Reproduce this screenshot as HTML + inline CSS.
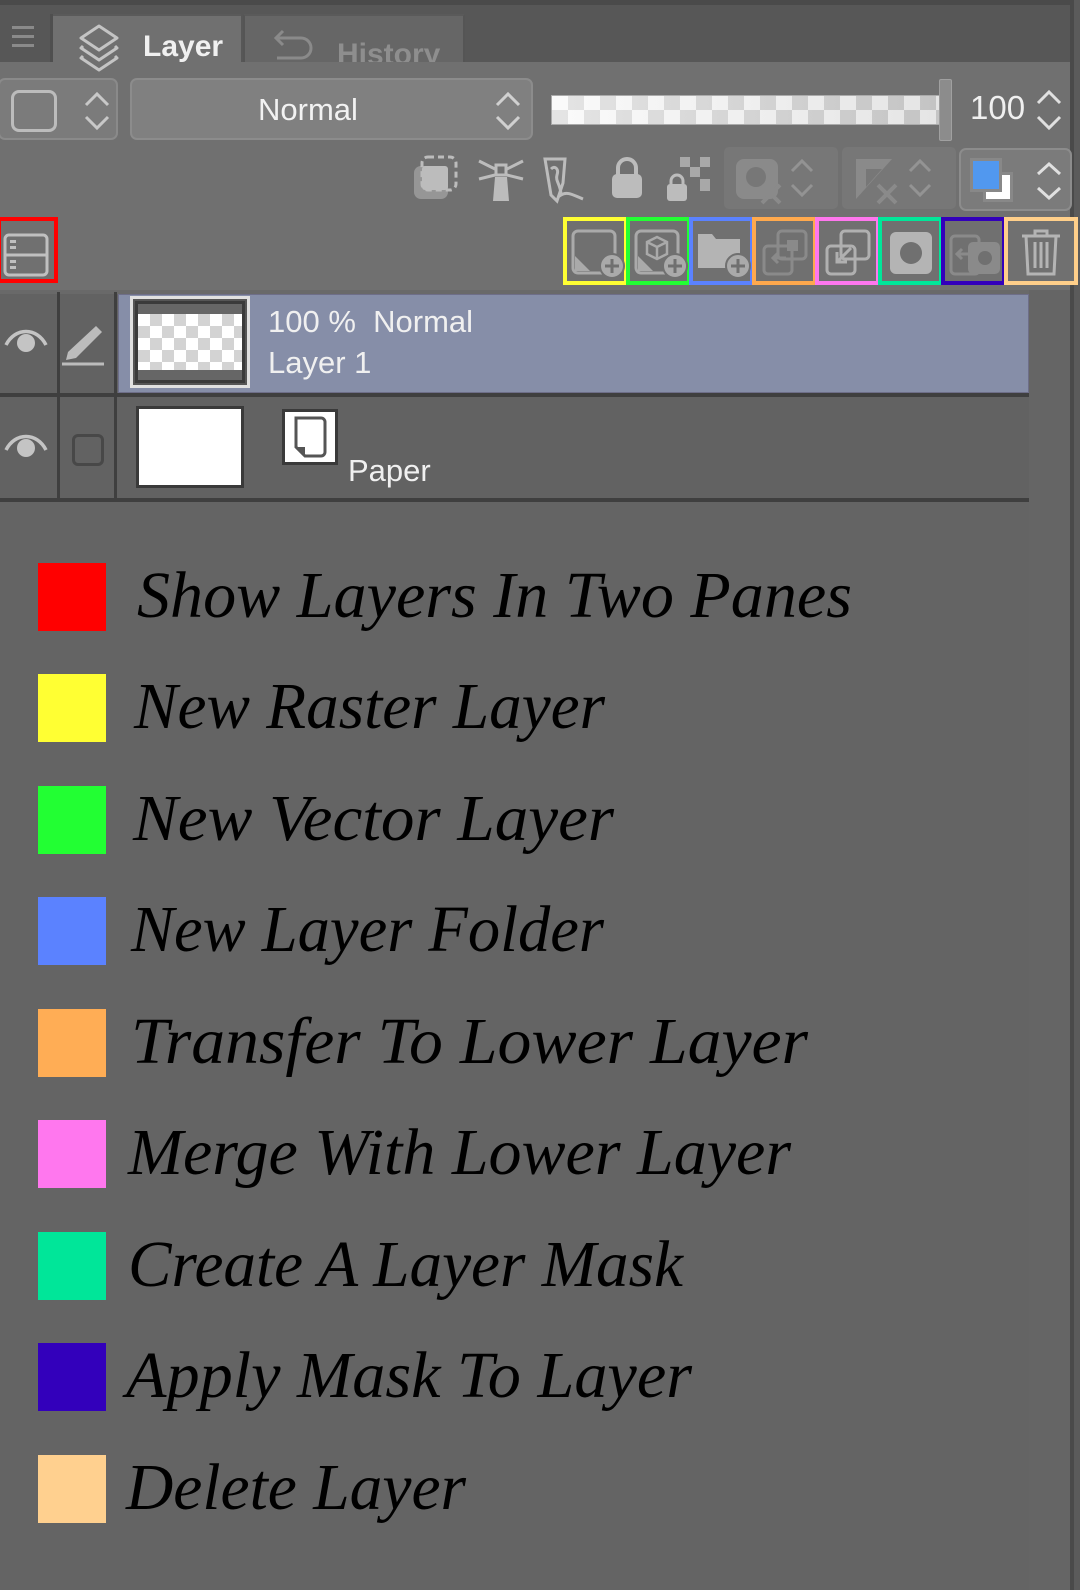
<!DOCTYPE html>
<html><head><meta charset="utf-8"><style>
html,body{margin:0;padding:0}
body{width:1080px;height:1590px;background:#646464;position:relative;overflow:hidden;font-family:"Liberation Sans",sans-serif}
.a{position:absolute}
</style></head><body>
<!-- header -->
<div class="a" style="left:0;top:0;width:1080px;height:62px;background:#575757"></div>
<div class="a" style="left:0;top:0;width:1080px;height:5px;background:#4a4a4a"></div>
<div class="a" style="left:0;top:62px;width:1072px;height:228px;background:#707070"></div>
<div class="a" style="left:1029px;top:290px;width:43px;height:1300px;background:#656565"></div>
<div class="a" style="left:1070px;top:0;width:4px;height:1590px;background:#4a4a4a"></div>
<div class="a" style="left:1074px;top:0;width:6px;height:1590px;background:#5b5b5b"></div>
<!-- hamburger -->
<div class="a" style="left:12px;top:26px;width:22px;height:3px;background:#8a8a8a"></div>
<div class="a" style="left:12px;top:35px;width:22px;height:3px;background:#8a8a8a"></div>
<div class="a" style="left:12px;top:44px;width:22px;height:3px;background:#8a8a8a"></div>
<div class="a" style="left:50px;top:14px;width:3px;height:48px;background:#4f4f4f"></div>
<!-- Layer tab -->
<div class="a" style="left:53px;top:14px;width:188px;height:48px;background:#707070;border-top:2px solid #5a5a5a"></div>
<svg class="a" style="left:74px;top:22px" width="50" height="55" viewBox="0 0 50 55"><g fill="none" stroke="#c4c4c4" stroke-width="3" stroke-linejoin="round"><path d="M25 4 L43 16 L25 28 L7 16 Z"/><path d="M9 24 L7 26 L25 38 L43 26 L41 24"/><path d="M9 34 L7 36 L25 48 L43 36 L41 34"/></g></svg>
<div class="a" style="left:143px;top:30px;font-size:30px;font-weight:bold;color:#f0f0f0">Layer</div>
<!-- History tab -->
<div class="a" style="left:243px;top:14px;width:218px;height:46px;background:#666;border-top:2px solid #5a5a5a;border-left:2px solid #555;border-right:2px solid #555;overflow:hidden">
<svg class="a" style="left:24px;top:12px" width="50" height="40" viewBox="0 0 50 40"><g fill="none" stroke="#8a8a8a" stroke-width="3"><path d="M8 10 H32 A10 10 0 0 1 32 30 H8"/><path d="M14 3 L7 10 L14 17"/></g></svg>
<div class="a" style="left:92px;top:22px;font-size:30px;font-weight:bold;color:#8e8e8e">History</div>
</div>
<!-- row 2 -->
<div class="a" style="left:-2px;top:78px;width:120px;height:62px;border:2px solid #8a8a8a;border-radius:7px;background:#7b7b7b;box-sizing:border-box"></div>
<div class="a" style="left:11px;top:90px;width:46px;height:42px;border:3px solid #bcbcbc;border-radius:8px;box-sizing:border-box"></div>
<svg class="a" style="left:82px;top:90px" width="30" height="42" viewBox="0 0 30 42"><g fill="none" stroke="#c8c8c8" stroke-width="3"><path d="M4 15 L15 4 L26 15"/><path d="M4 27 L15 38 L26 27"/></g></svg>
<div class="a" style="left:130px;top:78px;width:403px;height:62px;border:2px solid #8c8c8c;border-radius:7px;background:#808080;box-sizing:border-box"></div>
<div class="a" style="left:258px;top:92px;font-size:31px;color:#f2f2f2">Normal</div>
<svg class="a" style="left:493px;top:90px" width="30" height="42" viewBox="0 0 30 42"><g fill="none" stroke="#d0d0d0" stroke-width="3"><path d="M4 15 L15 4 L26 15"/><path d="M4 27 L15 38 L26 27"/></g></svg>
<!-- slider -->
<div class="a" style="left:551px;top:95px;width:393px;height:28px;border:1px solid #aaa;background-color:#ddd;background-image:linear-gradient(90deg,rgba(255,255,255,.6),rgba(205,205,205,.4)),repeating-conic-gradient(#bdbdbd 0 25%,#f4f4f4 0 50%);background-size:100% 100%,32px 28px"></div>
<div class="a" style="left:939px;top:79px;width:11px;height:60px;background:#8c8c8c;border:1px solid #a0a0a0;border-radius:2px"></div>
<div class="a" style="left:970px;top:89px;font-size:33px;color:#f0f0f0">100</div>
<svg class="a" style="left:1034px;top:88px" width="30" height="44" viewBox="0 0 30 44"><g fill="none" stroke="#e0e0e0" stroke-width="3"><path d="M4 15 L15 4 L26 15"/><path d="M4 29 L15 40 L26 29"/></g></svg>
<!-- row 3 icons -->
<svg class="a" style="left:412px;top:152px" width="50" height="50" viewBox="0 0 50 50"><rect x="2" y="14" width="34" height="33" rx="7" fill="#969696"/><rect x="10" y="5" width="34" height="33" rx="6" fill="none" stroke="#bcbcbc" stroke-width="3" stroke-dasharray="6 4"/><rect x="10" y="14" width="26" height="24" rx="3" fill="#bcbcbc"/></svg>
<svg class="a" style="left:477px;top:155px" width="48" height="50" viewBox="0 0 48 50"><g stroke="#bcbcbc" stroke-width="3"><path d="M2 6 L18 14 M46 6 L30 14 M2 24 L18 20 M46 24 L30 20"/></g><rect x="19" y="10" width="10" height="10" fill="none" stroke="#bcbcbc" stroke-width="3"/><path d="M18 22 H30 L32 46 H16 Z" fill="#bcbcbc"/></svg>
<svg class="a" style="left:543px;top:155px" width="48" height="50" viewBox="0 0 48 50"><path d="M2 4 H22 L20 28 L14 46 L8 40 Z" fill="none" stroke="#bcbcbc" stroke-width="3"/><path d="M8 14 C12 10 16 14 14 20 C12 26 18 30 18 40 C24 36 30 40 40 44" fill="none" stroke="#bcbcbc" stroke-width="3"/></svg>
<svg class="a" style="left:609px;top:155px" width="36" height="46" viewBox="0 0 36 46"><path d="M9 20 V13 A9 9 0 0 1 27 13 V20" fill="none" stroke="#bcbcbc" stroke-width="4"/><rect x="3" y="19" width="30" height="24" rx="5" fill="#bcbcbc"/></svg>
<svg class="a" style="left:665px;top:155px" width="50" height="50" viewBox="0 0 50 50"><g fill="#a8a8a8"><rect x="15" y="2" width="10" height="10"/><rect x="35" y="2" width="10" height="10"/><rect x="25" y="12" width="10" height="10"/><rect x="35" y="24" width="10" height="12"/></g><path d="M6 30 V26 A6 6 0 0 1 18 26 V30" fill="none" stroke="#bcbcbc" stroke-width="3"/><rect x="2" y="29" width="20" height="17" rx="3" fill="#bcbcbc"/></svg>
<div class="a" style="left:724px;top:147px;width:114px;height:62px;background:#777;border-radius:5px"></div>
<svg class="a" style="left:732px;top:155px" width="90" height="50" viewBox="0 0 90 50"><rect x="4" y="4" width="42" height="40" rx="8" fill="#8a8a8a"/><circle cx="24" cy="22" r="10" fill="#777"/><path d="M30 30 L48 48 M48 30 L30 48" stroke="#8a8a8a" stroke-width="4"/><g fill="none" stroke="#939393" stroke-width="3"><path d="M60 16 L70 6 L80 16"/><path d="M60 30 L70 40 L80 30"/></g></svg>
<div class="a" style="left:842px;top:147px;width:114px;height:62px;background:#777;border-radius:5px"></div>
<svg class="a" style="left:852px;top:155px" width="90" height="50" viewBox="0 0 90 50"><path d="M4 4 H40 L4 44 Z" fill="#8a8a8a"/><path d="M14 14 H30 L14 32 Z" fill="#777"/><path d="M26 30 L44 48 M44 30 L26 48" stroke="#8a8a8a" stroke-width="4"/><g fill="none" stroke="#939393" stroke-width="3"><path d="M58 16 L68 6 L78 16"/><path d="M58 30 L68 40 L78 30"/></g></svg>
<div class="a" style="left:959px;top:148px;width:113px;height:63px;border:2px solid #8c8c8c;border-radius:7px;background:#7b7b7b;box-sizing:border-box"></div>
<div class="a" style="left:983px;top:172px;width:24px;height:24px;background:#fff;border:3px solid #888"></div>
<div class="a" style="left:970px;top:158px;width:26px;height:28px;background:#5198ef;border:3px solid #888"></div>
<svg class="a" style="left:1034px;top:160px" width="30" height="42" viewBox="0 0 30 42"><g fill="none" stroke="#e0e0e0" stroke-width="3"><path d="M4 14 L15 4 L26 14"/><path d="M4 28 L15 38 L26 28"/></g></svg>
<!-- row 4 -->
<div class="a" style="left:-3px;top:217px;width:61px;height:66px;border:4px solid #f00;box-sizing:border-box"></div>
<svg class="a" style="left:3px;top:233px" width="46" height="44" viewBox="0 0 46 44"><g fill="none" stroke="#c0c0c0" stroke-width="3"><rect x="2" y="2" width="42" height="40" rx="4"/><path d="M2 22 H44"/></g><g fill="#c0c0c0"><rect x="7" y="7" width="6" height="3"/><rect x="7" y="13" width="6" height="3"/><rect x="7" y="27" width="6" height="3"/><rect x="7" y="33" width="6" height="3"/></g></svg>
<div class="a" style="left:563px;top:217px;width:65px;height:68px;border:4px solid #ffff33;box-sizing:border-box"></div>
<div class="a" style="left:626px;top:217px;width:65px;height:68px;border:4px solid #22ff33;box-sizing:border-box"></div>
<div class="a" style="left:689px;top:217px;width:65px;height:68px;border:4px solid #5b82ff;box-sizing:border-box"></div>
<div class="a" style="left:752px;top:217px;width:65px;height:68px;border:4px solid #ffa94d;box-sizing:border-box"></div>
<div class="a" style="left:815px;top:217px;width:65px;height:68px;border:4px solid #ff77ee;box-sizing:border-box"></div>
<div class="a" style="left:878px;top:217px;width:65px;height:68px;border:4px solid #00e699;box-sizing:border-box"></div>
<div class="a" style="left:941px;top:217px;width:65px;height:68px;border:4px solid #3300bb;box-sizing:border-box"></div>
<div class="a" style="left:1004px;top:217px;width:74px;height:68px;border:4px solid #ffcf8a;box-sizing:border-box;background:#707070"></div>
<svg class="a" style="left:570px;top:228px" width="56" height="52" viewBox="0 0 56 52"><rect x="3" y="3" width="42" height="42" rx="5" fill="none" stroke="#aaa" stroke-width="3"/><path d="M5 28 L20 43 H5 Z" fill="#aaa"/><circle cx="42" cy="38" r="12" fill="#aaa" stroke="#707070" stroke-width="2"/><path d="M42 31 V45 M35 38 H49" stroke="#707070" stroke-width="3"/></svg>
<svg class="a" style="left:633px;top:228px" width="56" height="52" viewBox="0 0 56 52"><rect x="3" y="3" width="42" height="42" rx="5" fill="none" stroke="#aaa" stroke-width="3"/><path d="M5 28 L20 43 H5 Z" fill="#aaa"/><path d="M14 14 L24 9 L34 14 V26 L24 31 L14 26 Z M14 14 L24 19 L34 14 M24 19 V31" fill="none" stroke="#aaa" stroke-width="2.5"/><circle cx="42" cy="38" r="12" fill="#aaa" stroke="#707070" stroke-width="2"/><path d="M42 31 V45 M35 38 H49" stroke="#707070" stroke-width="3"/></svg>
<svg class="a" style="left:696px;top:228px" width="56" height="52" viewBox="0 0 56 52"><path d="M2 6 H16 L20 11 H44 V40 H2 Z" fill="#b4b4b4"/><circle cx="42" cy="38" r="12" fill="#aaa" stroke="#707070" stroke-width="2"/><path d="M42 31 V45 M35 38 H49" stroke="#707070" stroke-width="3"/></svg>
<svg class="a" style="left:760px;top:228px" width="52" height="52" viewBox="0 0 52 52"><g fill="none" stroke="#8a8a8a" stroke-width="3"><rect x="18" y="3" width="28" height="28" rx="4"/><rect x="4" y="18" width="28" height="28" rx="4"/></g><rect x="27" y="12" width="11" height="11" fill="#8a8a8a"/><path d="M26 30 H14 M18 25 L13 30 L18 35" stroke="#8a8a8a" stroke-width="3" fill="none"/></svg>
<svg class="a" style="left:823px;top:228px" width="52" height="52" viewBox="0 0 52 52"><g fill="none" stroke="#b0b0b0" stroke-width="3"><rect x="18" y="3" width="28" height="28" rx="4"/><rect x="4" y="18" width="28" height="28" rx="4"/><path d="M28 20 L14 34 M14 24 V34 H24"/></g></svg>
<svg class="a" style="left:886px;top:228px" width="50" height="50" viewBox="0 0 50 50"><rect x="4" y="4" width="42" height="42" rx="6" fill="#b4b4b4"/><circle cx="25" cy="25" r="11" fill="#707070"/></svg>
<svg class="a" style="left:948px;top:228px" width="54" height="52" viewBox="0 0 54 52"><rect x="3" y="8" width="28" height="38" rx="4" fill="none" stroke="#8a8a8a" stroke-width="3"/><rect x="20" y="14" width="32" height="32" rx="5" fill="#8a8a8a"/><circle cx="37" cy="30" r="7" fill="#707070"/><path d="M22 26 H10 M14 21 L9 26 L14 31" stroke="#8a8a8a" stroke-width="3" fill="none"/></svg>
<svg class="a" style="left:1019px;top:228px" width="44" height="50" viewBox="0 0 44 50"><g fill="none" stroke="#b4b4b4" stroke-width="3"><path d="M3 8 H41 M16 8 V3 H28 V8 M7 8 L9 46 H35 L37 8 M16 14 V40 M22 14 V40 M28 14 V40"/></g></svg>
<!-- layer list -->
<div class="a" style="left:0;top:290px;width:1029px;height:220px;background:#626262"></div>
<div class="a" style="left:0;top:290px;width:1029px;height:4px;background:#696969"></div>
<div class="a" style="left:118px;top:294px;width:911px;height:99px;background:#868ea8;border:1px solid #6e6e88;box-sizing:border-box"></div>
<div class="a" style="left:57px;top:292px;width:3px;height:210px;background:#3f3f3f"></div>
<div class="a" style="left:114px;top:292px;width:3px;height:210px;background:#3f3f3f"></div>
<div class="a" style="left:0;top:393px;width:1029px;height:4px;background:#3f3f3f"></div>
<div class="a" style="left:0;top:498px;width:1029px;height:4px;background:#3f3f3f"></div>
<div class="a" style="left:0;top:502px;width:1029px;height:8px;background:#646464"></div>
<!-- eyes -->
<svg class="a" style="left:3px;top:325px" width="46" height="30" viewBox="0 0 46 30"><path d="M3 20 C12 2 34 2 43 20" fill="none" stroke="#c4c4c4" stroke-width="3.5"/><circle cx="23" cy="18" r="9" fill="#c4c4c4"/></svg>
<svg class="a" style="left:3px;top:430px" width="46" height="30" viewBox="0 0 46 30"><path d="M3 20 C12 2 34 2 43 20" fill="none" stroke="#c4c4c4" stroke-width="3.5"/><circle cx="23" cy="18" r="9" fill="#c4c4c4"/></svg>
<svg class="a" style="left:60px;top:322px" width="48" height="46" viewBox="0 0 48 46"><path d="M36 4 L42 10 L16 36 L6 38 L8 30 Z" fill="#bcbcbc"/><path d="M2 42 H44" stroke="#bcbcbc" stroke-width="3"/></svg>
<div class="a" style="left:72px;top:434px;width:32px;height:32px;border:3px solid #484848;border-radius:6px;box-sizing:border-box"></div>
<!-- thumbs -->
<div class="a" style="left:130px;top:296px;width:120px;height:92px;border:3px solid #e0e0e0;box-sizing:border-box;background:#555"></div>
<div class="a" style="left:135px;top:301px;width:110px;height:82px;border:3px solid #3a3a3a;box-sizing:border-box;background:#666"></div>
<div class="a" style="left:138px;top:314px;width:104px;height:56px;background-color:#fff;background-image:repeating-conic-gradient(#d3d3d3 0 25%,#fff 0 50%);background-size:24px 24px"></div>
<div class="a" style="left:136px;top:406px;width:108px;height:82px;border:3px solid #3a3a3a;box-sizing:border-box;background:#fff"></div>
<div class="a" style="left:282px;top:409px;width:56px;height:56px;border:3px solid #3a3a3a;box-sizing:border-box;background:#fff"></div>
<svg class="a" style="left:291px;top:414px" width="38" height="46" viewBox="0 0 38 46"><path d="M5 4 H30 A4 4 0 0 1 34 8 V38 A4 4 0 0 1 30 42 H14 L5 33 Z" fill="none" stroke="#555" stroke-width="3"/><path d="M5 33 H14 V42 Z" fill="#555"/></svg>
<div class="a" style="left:268px;top:304px;font-size:31px;color:#f0f0f0">100 %&nbsp; Normal</div>
<div class="a" style="left:268px;top:345px;font-size:31px;color:#f0f0f0">Layer 1</div>
<div class="a" style="left:348px;top:453px;font-size:31px;color:#f0f0f0">Paper</div>
<!-- legend -->
<div class="a" style="left:38px;top:563px;width:68px;height:68px;background:#ff0000"></div>
<div class="a" style="left:38px;top:674px;width:68px;height:68px;background:#ffff33"></div>
<div class="a" style="left:38px;top:786px;width:68px;height:68px;background:#22ff33"></div>
<div class="a" style="left:38px;top:897px;width:68px;height:68px;background:#5b82ff"></div>
<div class="a" style="left:38px;top:1009px;width:68px;height:68px;background:#ffad55"></div>
<div class="a" style="left:38px;top:1120px;width:68px;height:68px;background:#ff77ee"></div>
<div class="a" style="left:38px;top:1232px;width:68px;height:68px;background:#00e699"></div>
<div class="a" style="left:38px;top:1343px;width:68px;height:68px;background:#3300bb"></div>
<div class="a" style="left:38px;top:1455px;width:68px;height:68px;background:#ffd08f"></div>
<svg class="a" style="left:0;top:0" width="1070" height="1590" viewBox="0 0 1070 1590">
<g font-family="Liberation Serif, serif" font-style="italic" font-size="66" fill="#000">
<text x="137" y="617" textLength="715" lengthAdjust="spacingAndGlyphs">Show Layers In Two Panes</text>
<text x="134" y="728" textLength="471" lengthAdjust="spacingAndGlyphs">New Raster Layer</text>
<text x="133" y="840" textLength="481" lengthAdjust="spacingAndGlyphs">New Vector Layer</text>
<text x="131" y="951" textLength="473" lengthAdjust="spacingAndGlyphs">New Layer Folder</text>
<text x="131" y="1063" textLength="677" lengthAdjust="spacingAndGlyphs">Transfer To Lower Layer</text>
<text x="128" y="1174" textLength="663" lengthAdjust="spacingAndGlyphs">Merge With Lower Layer</text>
<text x="128" y="1286" textLength="555" lengthAdjust="spacingAndGlyphs">Create A Layer Mask</text>
<text x="126" y="1397" textLength="566" lengthAdjust="spacingAndGlyphs">Apply Mask To Layer</text>
<text x="126" y="1509" textLength="340" lengthAdjust="spacingAndGlyphs">Delete Layer</text>
</g></svg>
</body></html>
